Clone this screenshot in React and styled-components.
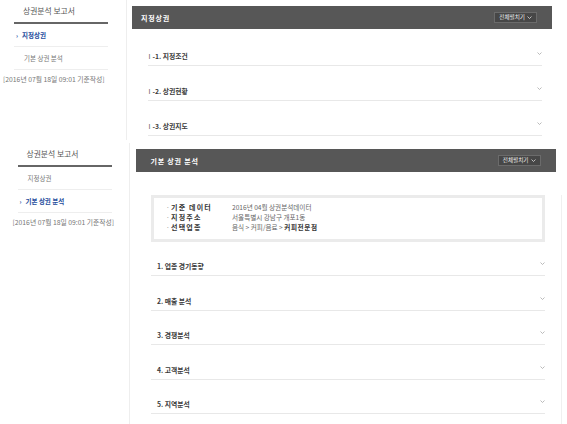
import React from "react";
import styled, { createGlobalStyle } from "styled-components";

const GlobalStyle = createGlobalStyle`
  html, body {
    margin: 0;
    padding: 0;
    background: #fff;
  }
  body {
    font-family: "Noto Sans CJK KR", "Noto Sans", sans-serif;
    color: #333;
  }
`

const Page = styled.div`
  width: 567px;
  height: 424px;
  overflow: hidden;
`

const Screen = styled.div`
  display: flex;
  align-items: stretch;
  box-sizing: border-box;
  height: ${(p) => p.$h}px;
  padding-top: ${(p) => p.$top}px;
  padding-left: ${(p) => p.$left}px;
`

const Sidebar = styled.div`
  width: 94px;
  flex-shrink: 0;
`

const SideTitle = styled.div`
  height: 22px;
  line-height: 22px;
  padding-left: 9px;
  font-size: 7.8px;
  color: #555;
  border-bottom: 2px solid #666;
`

const SideItem = styled.div`
  display: flex;
  align-items: center;
  height: 22px;
  padding-left: ${(p) => (p.$active ? "2px" : "10px")};
  font-size: 6.5px;
  color: ${(p) => (p.$active ? "#1d4c9c" : "#777")};
  font-weight: ${(p) => (p.$active ? 700 : 400)};
  border-bottom: 1px solid #eee;

  span {
    font-size: 6px;
    margin-right: 4px;
  }
`

const SideDate = styled.div`
  margin-top: 5px;
  margin-left: ${(p) => p.$shift}px;
  line-height: 9px;
  font-size: 6.8px;
  color: #777;
  white-space: nowrap;
`

const Main = styled.div`
  margin-left: 17.5px;
  border-left: 1px solid #eee;
  padding-left: 5.5px;
  width: 420px;
  flex-shrink: 0;
`

const Header = styled.div`
  display: flex;
  align-items: center;
  justify-content: space-between;
  margin-top: 6px;
  height: 23px;
  padding: 0 15px 0 ${(p) => p.$pad}px;
  background: #575757;
  color: #fff;
  font-size: 7px;
  font-weight: 700;
  letter-spacing: 0.8px;
`

const OpenAll = styled.button`
  display: flex;
  align-items: center;
  gap: 2px;
  flex-shrink: 0;
  white-space: nowrap;
  height: 11px;
  padding: 0 4px;
  background: #474747;
  border: 1px solid #6b6b6b;
  color: #eee;
  font-family: inherit;
  font-size: 5.6px;
  font-weight: 400;
  letter-spacing: 0;
  line-height: 9px;
  cursor: pointer;
`

const Body = styled.div`
  margin-right: -6px;
  padding: 0 16px 0 15.5px;
  border-right: ${(p) => (p.$line ? "1px solid #f0f0f0" : "none")};
  height: 100%;
`

const List = styled.div`
  padding-top: ${(p) => p.$top || 0}px;
`

const Row = styled.div`
  box-sizing: border-box;
  display: flex;
  align-items: flex-end;
  justify-content: space-between;
  height: ${(p) => p.$h}px;
  padding: 0 0 4px ${(p) => p.$indent}px;
  border-bottom: 1px solid #e8e8e8;
  font-size: 6.8px;
  font-weight: 700;
  line-height: 10px;
  color: #3a3a3a;

  svg {
    margin-bottom: 6px;
  }
`

const Numeral = styled.span`
  font-weight: 400;
  margin-right: 2px;
  color: #555;
`

const InfoBox = styled.div`
  margin-top: 23px;
  height: 47px;
  box-sizing: border-box;
  border: 3px solid #ebebeb;
  padding: 4px 0 7px 12px;
`

const InfoLine = styled.div`
  display: grid;
  grid-template-columns: 5px 61px 1fr;
  line-height: 10px;
  font-size: 6.6px;
  color: #666;
`

const Dot = styled.span`
  color: #999;
`

const Label = styled.span`
  font-weight: 700;
  font-size: 7px;
  color: #333;
  letter-spacing: 1.2px;
`

const Value = styled.span`
  b {
    color: #333;
    letter-spacing: 0.6px;
  }
`

const Chevron = ({ color = "#aaa" }) => (
  <svg width="5" height="3" viewBox="0 0 5 3">
    <path d="M0.5 0.5 L2.5 2.5 L4.5 0.5" fill="none" stroke={color} strokeWidth="0.8" />
  </svg>
)

const SideNav = ({ active, dateShift }) => (
  <Sidebar>
    <SideTitle>상권분석 보고서</SideTitle>
    <SideItem $active={active === 0}>
      {active === 0 && <span>›</span>}지정상권
    </SideItem>
    <SideItem $active={active === 1}>
      {active === 1 && <span>›</span>}기본 상권 분석
    </SideItem>
    <SideDate $shift={dateShift}>[2016년 07월 18일 09:01 기준작성]</SideDate>
  </Sidebar>
)

const PanelHeader = ({ title, pad }) => (
  <Header $pad={pad}>
    {title}
    <OpenAll>
      전체펼치기
      <Chevron color="#ddd" />
    </OpenAll>
  </Header>
)

const topRows = ["1. 지정조건", "2. 상권현황", "3. 상권지도"]
const bottomRows = ["1. 업종 경기동향", "2. 매출 분석", "3. 경쟁분석", "4. 고객분석", "5. 지역분석"]

const info = [
  { label: "기준 데이터", value: "2016년 04월 상권분석데이터" },
  { label: "지정주소", value: "서울특별시 강남구 개포1동" },
  { label: "선택업종", value: "음식 > 커피/음료 > ", strong: "커피전문점" },
]

export default function App() {
  return (
    <Page>
      <GlobalStyle />
      <Screen $h={140} $top={0} $left={14}>
        <SideNav active={0} dateShift={-11} />
        <Main>
          <PanelHeader title="지정상권" pad={9} />
          <Body>
            <List $top={1.5}>
              {topRows.map((r) => (
                <Row key={r} $h={35} $indent={1}>
                  <span>
                    <Numeral>I</Numeral>-{r}
                  </span>
                  <Chevron />
                </Row>
              ))}
            </List>
          </Body>
        </Main>
      </Screen>
      <Screen $h={284} $top={3} $left={17.5}>
        <SideNav active={1} dateShift={-5} />
        <Main>
          <PanelHeader title="기본 상권 분석" pad={15} />
          <Body $line>
            <InfoBox>
              {info.map((i) => (
                <InfoLine key={i.label}>
                  <Dot>·</Dot>
                  <Label>{i.label}</Label>
                  <Value>
                    {i.value}
                    {i.strong && <b>{i.strong}</b>}
                  </Value>
                </InfoLine>
              ))}
            </InfoBox>
            <List>
              {bottomRows.map((r) => (
                <Row key={r} $h={34.4} $indent={6}>
                  {r}
                  <Chevron />
                </Row>
              ))}
            </List>
          </Body>
        </Main>
      </Screen>
    </Page>
  )
}
